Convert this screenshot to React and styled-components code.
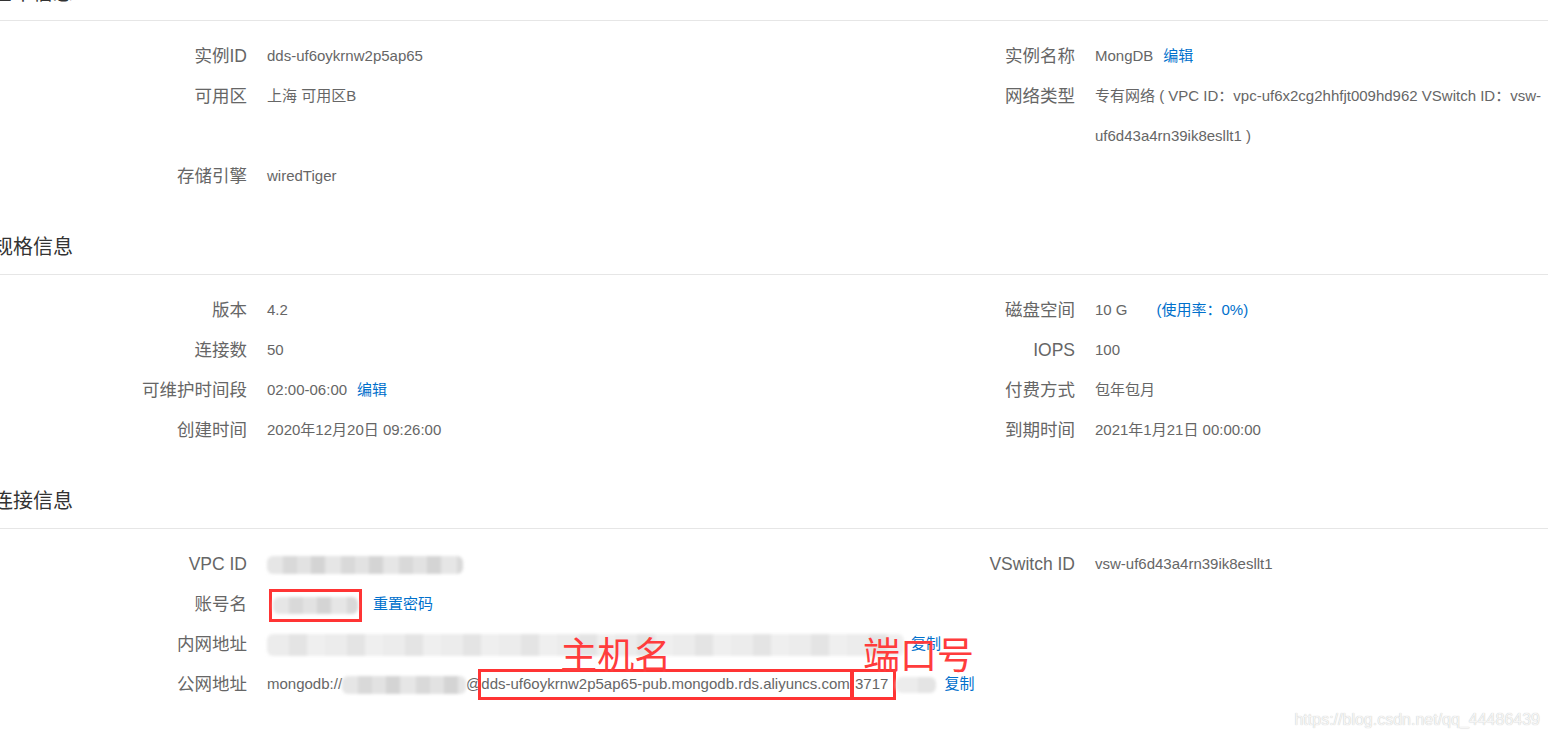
import React from "react";
import styled, { createGlobalStyle } from "styled-components";

const GlobalStyle = createGlobalStyle`
  html, body {
    margin: 0;
    padding: 0;
    background: #fff;
    overflow: hidden;
  }
  body {
    font-family: "Liberation Sans", "Noto Sans CJK SC", sans-serif;
  }
`;

const Page = styled.div`
  position: relative;
  width: 1548px;
  height: 735px;
  overflow: hidden;
`;

const Section = styled.section`
  margin-top: ${(p) => (p.$first ? "-22px" : "36px")};
`;

const Title = styled.h2`
  margin: 0;
  padding-bottom: 14px;
  font-family: "Noto Sans CJK SC", sans-serif;
  font-size: 20px;
  font-weight: 400;
  line-height: 28px;
  color: #333;
  border-bottom: 1px solid #e6e6e6;
  text-indent: -7px;
`;

const Grid = styled.div`
  display: grid;
  grid-template-columns: 828px 1fr;
  grid-auto-rows: minmax(40px, auto);
  padding-top: 15px;
`;

const Field = styled.div`
  display: flex;
  align-items: flex-start;
  grid-column: ${(p) => (p.$wide ? "1 / -1" : "auto")};
  position: relative;
`;

const Label = styled.div`
  width: 247px;
  flex-shrink: 0;
  text-align: right;
  font-family: "Liberation Sans", "Noto Sans CJK SC", sans-serif;
  font-size: 17.5px;
  line-height: 40px;
  color: #666;
  white-space: nowrap;
`;

const Value = styled.div`
  margin-left: 20px;
  padding-right: 4px;
  font-family: "Liberation Sans", "Noto Sans CJK SC", sans-serif;
  font-size: 15px;
  line-height: 40px;
  color: #666;
  min-width: 0;
`;

const Link = styled.a`
  margin-left: ${(p) => p.$gap}px;
  color: #0070cc;
  cursor: pointer;
`;

const Smudge = styled.span`
  display: inline-block;
  width: ${(p) => p.$w}px;
  height: ${(p) => p.$h}px;
  vertical-align: middle;
  border-radius: 6px;
  background: ${(p) =>
    p.$light
      ? "repeating-linear-gradient(90deg, #ececec 0 22px, #e4e4e4 22px 40px, #efefef 40px 58px)"
      : "repeating-linear-gradient(90deg, #e6e6e6 0 16px, #d9d9d9 16px 30px, #e2e2e2 30px 44px, #d4d4d4 44px 58px)"};
  filter: blur(1.5px);
`;

const Marked = styled.span`
  position: relative;
  display: inline-block;
  line-height: 17px;
  padding: 3px ${(p) => p.$pr ?? 0}px 5px ${(p) => p.$pl ?? 0}px;
  margin: 0 ${(p) => p.$mr ?? -3}px 0 ${(p) => p.$ml ?? -3}px;
  border: 3px solid #ff3434;
`;

const Hidden = styled.span`
  margin-right: -4px;
`;

const Note = styled.span`
  position: absolute;
  left: ${(p) => p.$left}px;
  bottom: 100%;
  font-family: "Noto Sans CJK SC", sans-serif;
  font-size: 37px;
  line-height: 37px;
  color: #ff3c3c;
  white-space: nowrap;
  pointer-events: none;
`;

const Watermark = styled.div`
  position: absolute;
  right: 8px;
  bottom: 6px;
  font-family: "Liberation Sans", sans-serif;
  font-size: 16px;
  color: #f6f6f6;
  text-shadow: 0 0 1px #b8b8b8;
`;

const basicInfo = [
  { label: "实例ID", value: "dds-uf6oykrnw2p5ap65" },
  {
    label: "实例名称",
    value: (
      <>
        MongDB<Link $gap={10}>编辑</Link>
      </>
    ),
  },
  { label: "可用区", value: "上海 可用区B" },
  {
    label: "网络类型",
    value:
      "专有网络 ( VPC ID：vpc-uf6x2cg2hhfjt009hd962 VSwitch ID：vsw-uf6d43a4rn39ik8esllt1 )",
  },
  { label: "存储引擎", value: "wiredTiger" },
];

const specInfo = [
  { label: "版本", value: "4.2" },
  {
    label: "磁盘空间",
    value: (
      <>
        10 G<Link $gap={29}>(使用率：0%)</Link>
      </>
    ),
  },
  { label: "连接数", value: "50" },
  { label: "IOPS", value: "100" },
  {
    label: "可维护时间段",
    value: (
      <>
        02:00-06:00<Link $gap={10}>编辑</Link>
      </>
    ),
  },
  { label: "付费方式", value: "包年包月" },
  { label: "创建时间", value: "2020年12月20日 09:26:00" },
  { label: "到期时间", value: "2021年1月21日 00:00:00" },
];

const connInfo = [
  { label: "VPC ID", value: <Smudge $w={196} $h={18} /> },
  { label: "VSwitch ID", value: "vsw-uf6d43a4rn39ik8esllt1" },
  {
    label: "账号名",
    wide: true,
    value: (
      <>
        <Marked $pl={1} $pr={1} $ml={2} $mr={0}>
          <Smudge $w={85} $h={17} />
        </Marked>
        <Link $gap={11}>重置密码</Link>
      </>
    ),
  },
  {
    label: "内网地址",
    wide: true,
    value: (
      <>
        <Smudge $w={637} $h={22} $light />
        <Link $gap={7}>复制</Link>
      </>
    ),
  },
  {
    label: "公网地址",
    wide: true,
    value: (
      <>
        mongodb://
        <Smudge $w={124} $h={18} />
        @
        <Marked>
          dds-uf6oykrnw2p5ap65-pub.mongodb.rds.aliyuncs.com
          <Note $left={79}>主机名</Note>
        </Marked>
        <Hidden>:</Hidden>
        <Marked $ml={1} $mr={0} $pl={1} $pr={5}>
          3717
          <Note $left={9}>端口号</Note>
        </Marked>
        <Smudge $w={40} $h={16} $light />
        <Link $gap={8}>复制</Link>
      </>
    ),
  },
];

const InfoSection = ({ title, fields, first }) => (
  <Section $first={first}>
    <Title>{title}</Title>
    <Grid>
      {fields.map((f) => (
        <Field key={f.label} $wide={f.wide}>
          <Label>{f.label}</Label>
          <Value>{f.value}</Value>
        </Field>
      ))}
    </Grid>
  </Section>
);

export default function App() {
  return (
    <Page>
      <GlobalStyle />
      <InfoSection title="基本信息" fields={basicInfo} first />
      <InfoSection title="规格信息" fields={specInfo} />
      <InfoSection title="连接信息" fields={connInfo} />
      <Watermark>https://blog.csdn.net/qq_44486439</Watermark>
    </Page>
  );
}
